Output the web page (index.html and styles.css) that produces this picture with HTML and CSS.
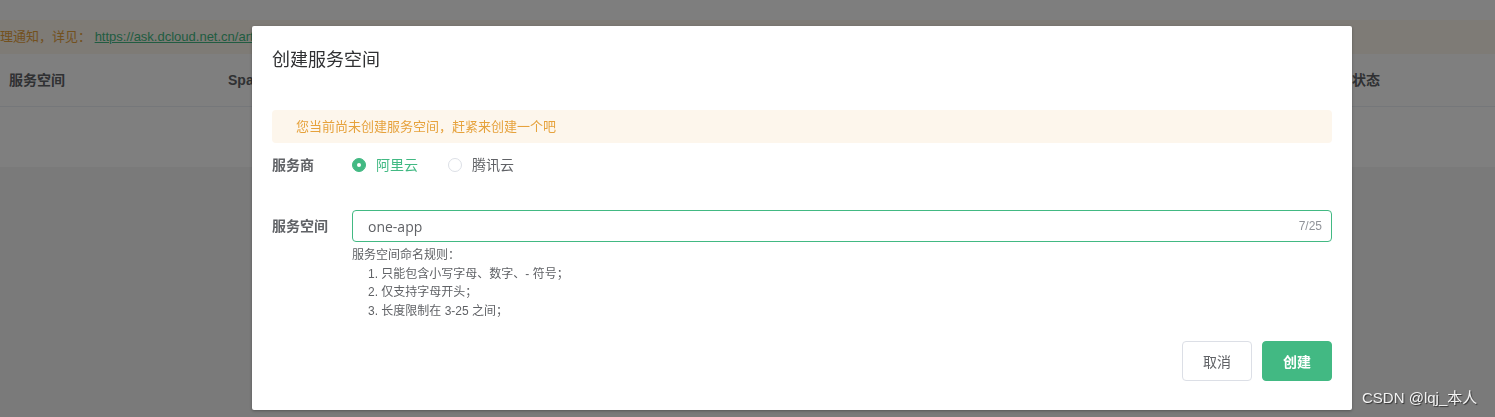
FILE: index.html
```html
<!DOCTYPE html>
<html lang="zh-CN">
<head>
<meta charset="utf-8">
<title>创建服务空间</title>
<link rel="stylesheet" href="styles.css">
</head>
<body>
<div class="page">
  <div class="topbar"></div>
  <div class="notice">理通知，详见： <a class="notice-link" href="#">https://ask.dcloud.net.cn/article/39128</a></div>
  <div class="thead">
    <div class="th">服务空间</div>
    <div class="th">SpaceId</div>
    <div class="th">服务状态</div>
  </div>
  <div class="trow"></div>
</div>

<div class="mask"></div>

<div class="dialog">
  <div class="dialog-title">创建服务空间</div>
  <div class="alert">您当前尚未创建服务空间，赶紧来创建一个吧</div>
  <div class="form-row radio-row">
    <div class="label">服务商</div>
    <div class="radios">
      <span class="radio checked"><span class="radio-dot"></span><span class="radio-text">阿里云</span></span>
      <span class="radio"><span class="radio-dot"></span><span class="radio-text">腾讯云</span></span>
    </div>
  </div>
  <div class="form-row input-row">
    <div class="label">服务空间</div>
    <div class="field">
      <div class="input">
        <input class="input-inner" type="text" value="one-app">
        <span class="counter">7/25</span>
      </div>
      <div class="help">
        <div>服务空间命名规则：</div>
        <div class="rule">1. 只能包含小写字母、数字、- 符号；</div>
        <div class="rule">2. 仅支持字母开头；</div>
        <div class="rule">3. 长度限制在 3-25 之间；</div>
      </div>
    </div>
  </div>
  <div class="footer">
    <button class="btn btn-default">取消</button>
    <button class="btn btn-primary">创建</button>
  </div>
</div>

<div class="watermark">CSDN @lqj_本人</div>
</body>
</html>
```
FILE: styles.css
```css
html, body {
  margin: 0;
  padding: 0;
}
body {
  width: 1495px;
  height: 417px;
  overflow: hidden;
  background: #f5f5f5;
  font-family: "Liberation Sans", "Noto Sans CJK SC", sans-serif;
  position: relative;
}
.page {
  display: flex;
  flex-direction: column;
}
.topbar {
  height: 20px;
  background: #fdfdfd;
}
.notice {
  height: 34px;
  line-height: 34px;
  background: #fdf6ec;
  color: #e6a23c;
  font-size: 13px;
  white-space: nowrap;
  overflow: hidden;
}
.notice-link {
  color: #42b983;
  text-decoration: underline;
}
.thead {
  display: grid;
  grid-template-columns: 219px 1096px 1fr;
  padding-left: 9px;
  height: 52px;
  line-height: 52px;
  background: #ffffff;
  border-bottom: 1px solid #ebeef5;
}
.th {
  font-size: 14px;
  font-weight: bold;
  color: #606266;
  white-space: nowrap;
}
.trow {
  height: 60px;
  background: #ffffff;
}
.mask {
  position: fixed;
  inset: 0;
  background: rgba(0, 0, 0, 0.5);
}
.dialog {
  position: absolute;
  left: 252px;
  top: 26px;
  width: 1100px;
  box-sizing: border-box;
  padding: 20px 20px 29px;
  background: #ffffff;
  border-radius: 2px;
  box-shadow: 0 1px 3px rgba(0, 0, 0, 0.3);
}
.dialog-title {
  font-size: 18px;
  line-height: 24px;
  color: #303133;
  font-family: "Noto Sans CJK SC", sans-serif;
}
.alert {
  margin-top: 40px;
  height: 33px;
  line-height: 33px;
  padding: 0 24px;
  background: #fdf6ec;
  color: #e6a23c;
  font-size: 13px;
  border-radius: 4px;
}
.form-row {
  display: flex;
}
.label {
  width: 80px;
  flex: none;
  font-size: 14px;
  font-weight: bold;
  color: #606266;
}
.radio-row {
  margin-top: 2px;
  height: 40px;
  line-height: 40px;
}
.radios {
  display: flex;
  align-items: center;
  gap: 30px;
}
.radio {
  display: flex;
  align-items: center;
  gap: 10px;
  font-size: 14px;
  color: #606266;
}
.radio-dot {
  width: 14px;
  height: 14px;
  box-sizing: border-box;
  border-radius: 50%;
  border: 1px solid #dcdfe6;
  background: #ffffff;
  position: relative;
}
.radio.checked .radio-dot {
  border-color: #42b983;
  background: #42b983;
}
.radio.checked .radio-dot::after {
  content: "";
  position: absolute;
  left: 50%;
  top: 50%;
  width: 4px;
  height: 4px;
  margin: -2px 0 0 -2px;
  border-radius: 50%;
  background: #ffffff;
}
.radio.checked .radio-text {
  color: #42b983;
}
.input-row {
  margin-top: 25px;
}
.input-row .label {
  line-height: 32px;
}
.field {
  flex: 1;
}
.input {
  display: flex;
  align-items: center;
  height: 32px;
  box-sizing: border-box;
  border: 1px solid #42b983;
  border-radius: 4px;
  padding: 0 9px 0 15px;
}
.input-inner {
  flex: 1;
  border: 0;
  outline: none;
  padding: 0;
  font-size: 14px;
  color: #606266;
  font-family: "Open Sans", "Noto Sans CJK SC", sans-serif;
  background: transparent;
}
.counter {
  font-size: 12px;
  color: #909399;
}
.help {
  margin-top: 4px;
  font-size: 12px;
  line-height: 18.5px;
  color: #606266;
}
.rule {
  padding-left: 16px;
}
.footer {
  margin-top: 21px;
  display: flex;
  justify-content: flex-end;
  gap: 10px;
}
.btn {
  width: 70px;
  height: 40px;
  border-radius: 4px;
  font-size: 14px;
  font-family: "Noto Sans CJK SC", sans-serif;
  cursor: pointer;
  padding: 0;
}
.btn-default {
  background: #ffffff;
  border: 1px solid #dcdfe6;
  color: #606266;
}
.btn-primary {
  background: #42b983;
  border: 1px solid #42b983;
  color: #ffffff;
  font-weight: bold;
}
.watermark {
  position: absolute;
  left: 1362px;
  top: 388px;
  font-size: 15px;
  line-height: 20px;
  color: #f2f2f2;
  text-shadow: 1px 1px 1px rgba(0, 0, 0, 0.6);
  font-family: "Liberation Sans", "Noto Sans CJK SC", sans-serif;
  white-space: nowrap;
}
```
